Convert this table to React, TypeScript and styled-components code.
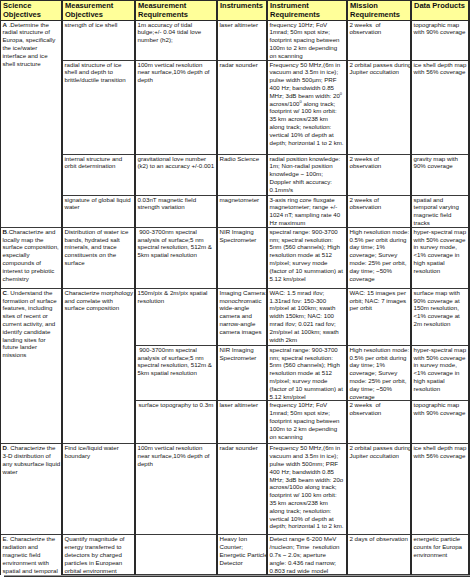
import React from 'react';
import styled, { createGlobalStyle } from 'styled-components';

const Global = createGlobalStyle`
  html, body { margin: 0; padding: 0; background: #fff; }
  body { width: 474px; height: 577px; overflow: hidden; font-family: "Liberation Sans", Arial, sans-serif; }
`;

const Page = styled.div`
  width: 474px;
  height: 577px;
  overflow: hidden;
  background: #fff;
  display: flex;
  flex-direction: column;
`;

const Table = styled.table`
  border-collapse: collapse;
  table-layout: fixed;
  width: 469px;
  margin-left: -1px;
  color: #151515;
`;

const Col = styled.col<{ $w: number }>`
  width: ${(p) => p.$w}px;
`;

const Tr = styled.tr<{ $h: number }>`
  height: ${(p) => p.$h}px;
`;

const Th = styled.th`
  background: #ffff99;
  font-weight: bold;
  font-size: 7.5px;
  line-height: 9.3px;
  text-align: left;
  vertical-align: top;
  padding: 0 0 0 2px;
  border-left: 2px solid #2a2a2a;
  border-right: 2px solid #2a2a2a;
  border-top: 1px solid #2a2a2a;
  border-bottom: 1px solid #2a2a2a;
  white-space: nowrap;
  overflow: hidden;
  color: #111;
`;

const Td = styled.td<{ $indent?: number; $noBottom?: boolean }>`
  font-size: 6.15px;
  line-height: 7.8px;
  vertical-align: top;
  text-align: left;
  padding: 0 0 0 ${(p) => 1.5 + (p.$indent || 0)}px;
  border-left: 2px solid #2a2a2a;
  border-right: 2px solid #2a2a2a;
  border-top: 1px solid #3a3a3a;
  border-bottom: ${(p) => (p.$noBottom ? 'none' : '1px solid #3a3a3a')};
  white-space: nowrap;
  overflow: hidden;
`;

const Lead = styled.b`
  font-weight: bold;
`;

const Sup = styled.sup`
  font-size: 4px;
  line-height: 0;
  vertical-align: 3px;
`;

const Footer = styled.div`
  margin: auto 4px 0 4px;
  height: 2px;
  background: #333;
  border-top: 1px solid #9a9a9a;
`;

const Lines: React.FC<{ l: React.ReactNode[] }> = ({ l }) => (
  <>
    {l.map((x, i) => (
      <React.Fragment key={i}>
        {i > 0 && <br />}
        {x}
      </React.Fragment>
    ))}
  </>
);

const altimeterReq = [
  'frequency 10Hz; FoV',
  '1mrad; 50m spot size;',
  'footprint spacing between',
  '100m to 2 km depending',
  'on scanning',
];

const nirMeas = [
  '\u00a0900-3700nm spectral',
  'analysis of surface;5 nm',
  'spectral resolution, 512m &',
  '5km spatial resolution',
];
const nirReq = [
  'spectral range: 900-3700',
  'nm; spectral resolution:',
  '5nm (560 channels); High',
  'resolution mode at 512',
  'm/pixel; survey mode',
  '(factor of 10 summation) at',
  '5.12 km/pixel',
];
const nirMission = [
  'High resolution mode:',
  '0.5% per orbit during',
  'day time; 1%',
  'coverage; Survey',
  'mode: 25% per orbit,',
  'day time; ~50%',
  'coverage',
];
const nirData = [
  'hyper-spectral map',
  'with 50% coverage',
  'in survey mode,',
  '<1% coverage in',
  'high spatial',
  'resolution',
];

export default function App() {
  return (
    <Page>
      <Global />
      <Table>
        <colgroup>
          <Col $w={62} />
          <Col $w={73} />
          <Col $w={82} />
          <Col $w={50} />
          <Col $w={80} />
          <Col $w={64} />
          <Col $w={58} />
        </colgroup>
        <thead>
          <Tr $h={19}>
            <Th><Lines l={['Science', 'Objectives']} /></Th>
            <Th><Lines l={['Measurement', 'Objectives']} /></Th>
            <Th><Lines l={['Measurement', 'Requirements']} /></Th>
            <Th>Instruments</Th>
            <Th><Lines l={['Instrument', 'Requirements']} /></Th>
            <Th><Lines l={['Mission', 'Requirements']} /></Th>
            <Th>Data Products</Th>
          </Tr>
        </thead>
        <tbody>
          <Tr $h={39}>
            <Td rowSpan={4}>
              <Lines
                l={[
                  <><Lead>A</Lead> .Determine the</>,
                  'radial structure of',
                  'Europa, specifically',
                  'the ice/water',
                  'interface and ice',
                  'shell structure',
                ]}
              />
            </Td>
            <Td>strength of ice shell</Td>
            <Td><Lines l={['1m accuracy of tidal', 'bulge;+/- 0.04 tidal love', 'number (h2);']} /></Td>
            <Td>laser altimeter</Td>
            <Td><Lines l={altimeterReq} /></Td>
            <Td><Lines l={['2 weeks \u00a0of', 'observation']} /></Td>
            <Td><Lines l={['topographic map', 'with 90% coverage']} /></Td>
          </Tr>
          <Tr $h={94}>
            <Td><Lines l={['radial structure of ice', 'shell and depth to', 'brittle/ductile transition']} /></Td>
            <Td><Lines l={['100m vertical resolution', 'near surface,10% depth of', 'depth']} /></Td>
            <Td>radar sounder</Td>
            <Td>
              <Lines
                l={[
                  'Frequency 50 MHz,(6m in',
                  'vacuum and 3.5m in ice);',
                  'pulse width 500\u00b5m; PRF',
                  '400 Hz; bandwidth 0.85',
                  <>MHz; 3dB beam width: 20<Sup>0</Sup></>,
                  <>across/100<Sup>0</Sup> along track;</>,
                  'footprint w/ 100 km orbit:',
                  '35 km across/238 km',
                  'along track; resolution:',
                  'vertical 10% of depth at',
                  'depth; horizontal 1 to 2 km.',
                ]}
              />
            </Td>
            <Td><Lines l={['2 orbital passes during', 'Jupiter occultation']} /></Td>
            <Td><Lines l={['ice shell depth map', 'with 56% coverage']} /></Td>
          </Tr>
          <Tr $h={41}>
            <Td><Lines l={['internal structure and', 'orbit determination']} /></Td>
            <Td><Lines l={['gravitational love number', '(k2) to an accuracy +/-0.001']} /></Td>
            <Td>Radio Science</Td>
            <Td>
              <Lines
                l={[
                  'radial position knowledge:',
                  '1m; Non-radial position',
                  'knowledge ~ 100m;',
                  'Doppler shift accuracy:',
                  '0.1mm/s',
                ]}
              />
            </Td>
            <Td><Lines l={['2 weeks of', 'observation']} /></Td>
            <Td><Lines l={['gravity map with', '90% coverage']} /></Td>
          </Tr>
          <Tr $h={31}>
            <Td><Lines l={['signature of global liquid', 'water']} /></Td>
            <Td><Lines l={['0.03nT magnetic field', 'strength variation']} /></Td>
            <Td>magnetometer</Td>
            <Td>
              <Lines
                l={[
                  '3-axis ring core fluxgate',
                  'magnetometer; range +/-',
                  '1024 nT; sampling rate 40',
                  'Hz maximum',
                ]}
              />
            </Td>
            <Td><Lines l={['2 weeks of', 'observation']} /></Td>
            <Td><Lines l={['spatial and', 'temporal varying', 'magnetic field', 'tracks']} /></Td>
          </Tr>
          <Tr $h={61}>
            <Td>
              <Lines
                l={[
                  <><Lead>B</Lead>.Characterize and</>,
                  'locally map the',
                  'surface composition,',
                  'especially',
                  'compounds of',
                  'interest to prebiotic',
                  'chemistry',
                ]}
              />
            </Td>
            <Td>
              <Lines
                l={[
                  'Distribution of water ice',
                  'bands, hydrated salt',
                  'minerals, and trace',
                  'constituents on the',
                  'surface',
                ]}
              />
            </Td>
            <Td><Lines l={nirMeas} /></Td>
            <Td><Lines l={['NIR Imaging', 'Spectrometer']} /></Td>
            <Td><Lines l={nirReq} /></Td>
            <Td><Lines l={nirMission} /></Td>
            <Td><Lines l={nirData} /></Td>
          </Tr>
          <Tr $h={57}>
            <Td rowSpan={3}>
              <Lines
                l={[
                  <><Lead>C</Lead>. Understand the</>,
                  'formation of surface',
                  'features, including',
                  'sites of recent or',
                  'current activity, and',
                  'identify candidate',
                  'landing sites for',
                  'future lander',
                  'missions',
                ]}
              />
            </Td>
            <Td rowSpan={3}>
              <Lines l={['Characterize morphology', 'and correlate with', 'surface composition']} />
            </Td>
            <Td><Lines l={['150m/pix & 2m/pix spatial', 'resolution']} /></Td>
            <Td>
              <Lines
                l={[
                  'Imaging Camera:',
                  'monochromatic',
                  'wide-angle',
                  'camera and',
                  'narrow-angle',
                  'camera images',
                ]}
              />
            </Td>
            <Td>
              <Lines
                l={[
                  'WAC: 1.5 mrad ifov;',
                  '1.31rad fov: 150-300',
                  'm/pixel at 100km; swath',
                  'width 150km; NAC: 100',
                  'mrad ifov; 0.021 rad fov;',
                  '2m/pixel at 100km; swath',
                  'width 2km',
                ]}
              />
            </Td>
            <Td><Lines l={['WAC: 15 images per', 'orbit; NAC: 7 images', 'per orbit']} /></Td>
            <Td>
              <Lines
                l={[
                  'surface map with',
                  '90% coverage at',
                  '150m resolution,',
                  '<1% coverage at',
                  '2m resolution',
                ]}
              />
            </Td>
          </Tr>
          <Tr $h={48}>
            <Td><Lines l={nirMeas} /></Td>
            <Td><Lines l={['NIR Imaging', 'Spectrometer']} /></Td>
            <Td><Lines l={nirReq} /></Td>
            <Td><Lines l={nirMission} /></Td>
            <Td><Lines l={nirData} /></Td>
          </Tr>
          <Tr $h={43}>
            <Td $indent={1}>surface topography to 0.3m</Td>
            <Td>laser altimeter</Td>
            <Td><Lines l={altimeterReq} /></Td>
            <Td><Lines l={['2 weeks \u00a0of', 'observation']} /></Td>
            <Td><Lines l={['topographic map', 'with 90% coverage']} /></Td>
          </Tr>
          <Tr $h={91}>
            <Td>
              <Lines
                l={[
                  <><Lead>D</Lead>. Characterize the</>,
                  '3-D distribution of',
                  'any subsurface liquid',
                  'water',
                ]}
              />
            </Td>
            <Td><Lines l={['Find ice/liquid water', 'boundary']} /></Td>
            <Td><Lines l={['100m vertical resolution', 'near surface,10% depth of', 'depth']} /></Td>
            <Td>radar sounder</Td>
            <Td>
              <Lines
                l={[
                  'Frequency 50 MHz,(6m in',
                  'vacuum and 3.5m in ice);',
                  'pulse width 500mm; PRF',
                  '400 Hz; bandwidth 0.85',
                  'MHz; 3dB beam width: 20o',
                  'across/100o along track;',
                  'footprint w/ 100 km orbit:',
                  '35 km across/238 km',
                  'along track; resolution:',
                  'vertical 10% of depth at',
                  'depth; horizontal 1 to 2 km.',
                ]}
              />
            </Td>
            <Td><Lines l={['2 orbital passes during', 'Jupiter occultation']} /></Td>
            <Td><Lines l={['ice shell depth map', 'with 56% coverage']} /></Td>
          </Tr>
          <Tr $h={39}>
            <Td $noBottom>
              <Lines
                l={[
                  'E. Characterize the',
                  'radiation and',
                  'magnetic field',
                  'environment with',
                  'spatial and temporal',
                ]}
              />
            </Td>
            <Td>
              <Lines
                l={[
                  'Quantify magnitude of',
                  'energy transferred to',
                  'detectors by charged',
                  'particles in European',
                  'orbital environment',
                ]}
              />
            </Td>
            <Td />
            <Td><Lines l={['Heavy Ion', 'Counter;', 'Energetic Particle', 'Detector']} /></Td>
            <Td>
              <Lines
                l={[
                  'Detect range 6-200 MeV',
                  '/nucleon; Time \u00a0resolution',
                  '0.7s ~ 2.0s; aperture',
                  'angle: 0.436 rad narrow;',
                  '0.803 rad wide model',
                ]}
              />
            </Td>
            <Td>2 days of observation</Td>
            <Td><Lines l={['energetic particle', 'counts for Europa', 'environment']} /></Td>
          </Tr>
        </tbody>
      </Table>
      <Footer />
    </Page>
  );
}
